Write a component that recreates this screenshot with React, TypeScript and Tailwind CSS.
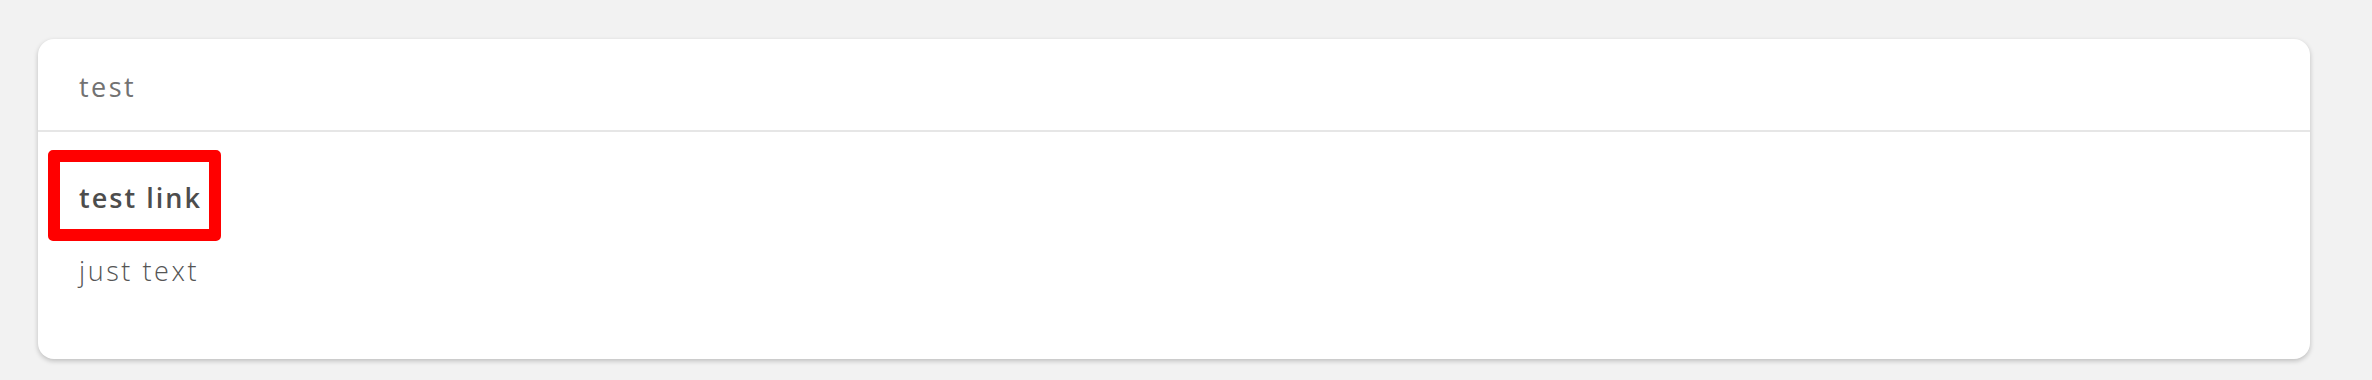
export default function App() {
  return (
    <div className="min-h-[380px] bg-[#f2f2f2] pt-[39px] pl-[38px] pr-[62px] pb-[20px]" style={{ fontFamily: '"Open Sans", "Liberation Sans", sans-serif' }}>
      <div className="bg-white rounded-[16px] shadow-[0_2px_5px_rgba(0,0,0,0.22)]">
        {/* Header */}
        <div className="h-[93px] flex items-center pt-[5px] pl-[41px] border-b-2 border-[#e6e6e6]">
          <span className="text-[27px] font-medium tracking-[0.09em] text-[#727272]">test</span>
        </div>

        {/* Body */}
        <div className="pt-[18px] pb-[68px] pl-[10px]">
          <a
            href="#"
            className="inline-flex items-center h-[91px] border-[12px] border-[#ff0000] rounded-[5px] pt-[5px] pl-[19px] pr-[7px] text-[27px] font-semibold tracking-[0.075em] text-[#4d4d4d] no-underline"
          >
            test link
          </a>
          <p className="mt-[10px] pl-[31px] leading-[40px] text-[27px] font-light tracking-[0.095em] text-[#555555]">just text</p>
        </div>
      </div>
    </div>
  );
}
